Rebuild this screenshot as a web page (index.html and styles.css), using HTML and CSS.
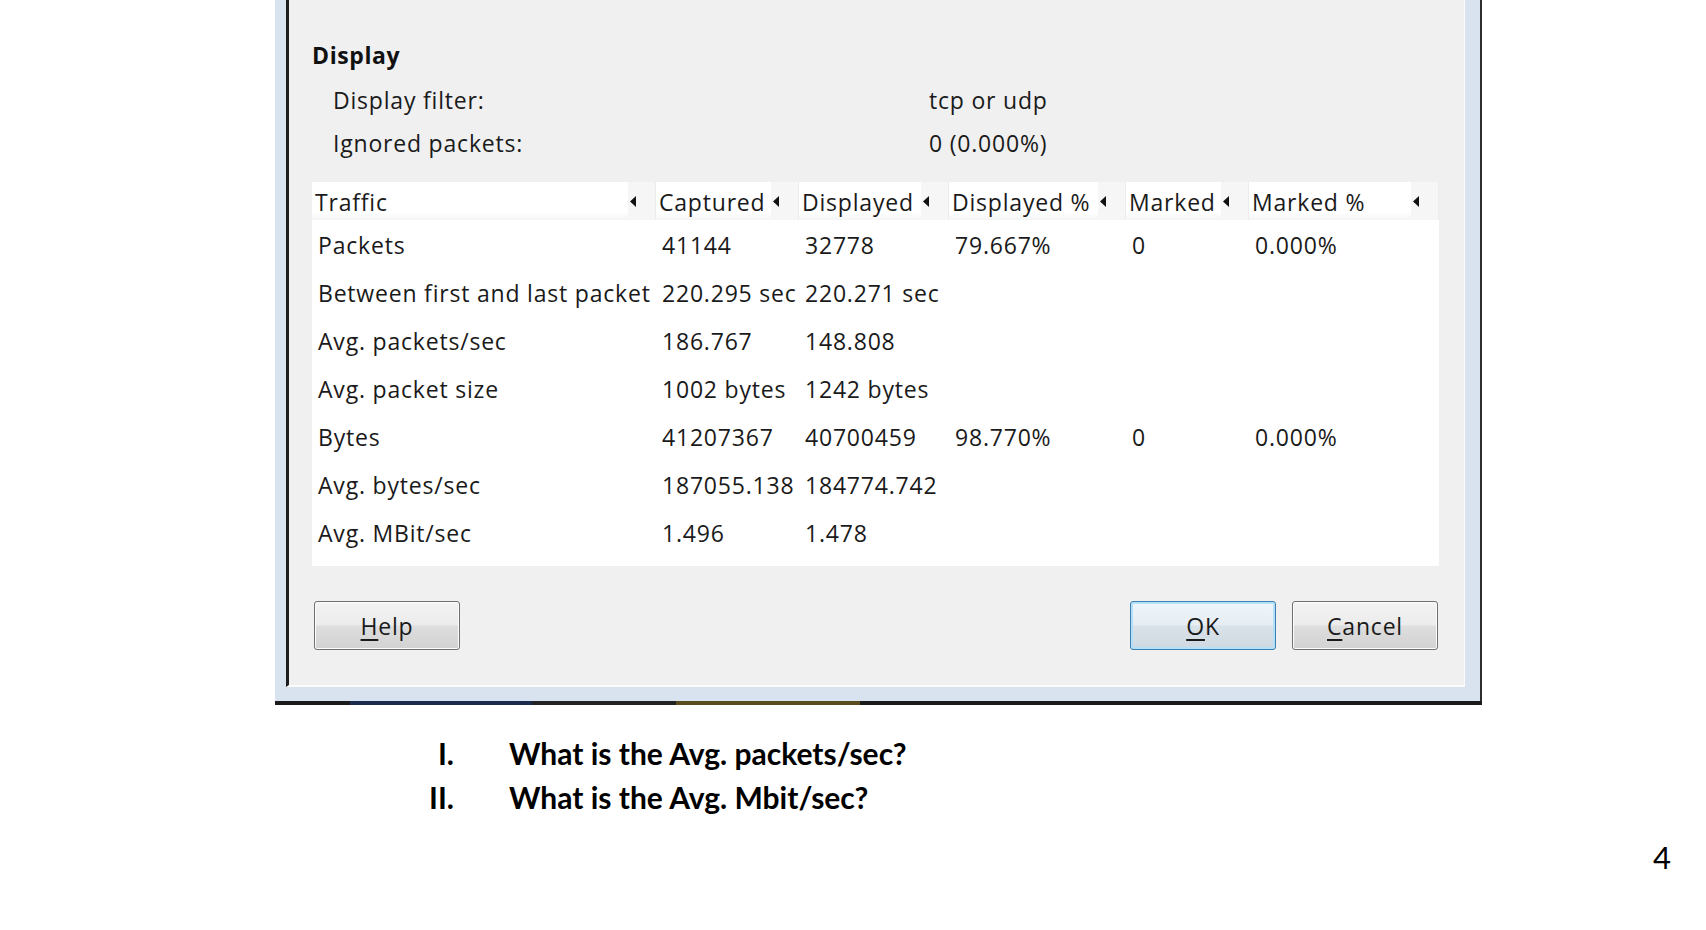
FILE: index.html
```html
<!DOCTYPE html>
<html lang="en">
<head>
<meta charset="utf-8">
<title>Capture File Properties - Display</title>
<link rel="stylesheet" href="styles.css">
</head>
<body>
<div class="page">
  <div class="dialog">
    <div class="panel">
      <div class="section-title">Display</div>
      <div class="props">
        <div class="prop"><span class="prop-label">Display filter:</span><span class="prop-value">tcp or udp</span></div>
        <div class="prop"><span class="prop-label">Ignored packets:</span><span class="prop-value">0 (0.000%)</span></div>
      </div>
      <div class="table">
        <div class="thead">
          <div class="th"><span class="th-label">Traffic</span><span class="th-sort"><svg class="arrow" viewBox="0 0 6 11" width="6" height="11"><polygon points="6,0 6,11 0,5.5"/></svg></span></div>
          <div class="th"><span class="th-label">Captured</span><span class="th-sort"><svg class="arrow" viewBox="0 0 6 11" width="6" height="11"><polygon points="6,0 6,11 0,5.5"/></svg></span></div>
          <div class="th"><span class="th-label">Displayed</span><span class="th-sort"><svg class="arrow" viewBox="0 0 6 11" width="6" height="11"><polygon points="6,0 6,11 0,5.5"/></svg></span></div>
          <div class="th"><span class="th-label">Displayed %</span><span class="th-sort"><svg class="arrow" viewBox="0 0 6 11" width="6" height="11"><polygon points="6,0 6,11 0,5.5"/></svg></span></div>
          <div class="th"><span class="th-label">Marked</span><span class="th-sort"><svg class="arrow" viewBox="0 0 6 11" width="6" height="11"><polygon points="6,0 6,11 0,5.5"/></svg></span></div>
          <div class="th"><span class="th-label">Marked %</span><span class="th-sort"><svg class="arrow" viewBox="0 0 6 11" width="6" height="11"><polygon points="6,0 6,11 0,5.5"/></svg></span></div>
        </div>
        <div class="tbody">
          <div class="tr"><span>Packets</span><span>41144</span><span>32778</span><span>79.667%</span><span>0</span><span>0.000%</span></div>
          <div class="tr"><span>Between first and last packet</span><span>220.295 sec</span><span>220.271 sec</span><span></span><span></span><span></span></div>
          <div class="tr"><span>Avg. packets/sec</span><span>186.767</span><span>148.808</span><span></span><span></span><span></span></div>
          <div class="tr"><span>Avg. packet size</span><span>1002 bytes</span><span>1242 bytes</span><span></span><span></span><span></span></div>
          <div class="tr"><span>Bytes</span><span>41207367</span><span>40700459</span><span>98.770%</span><span>0</span><span>0.000%</span></div>
          <div class="tr"><span>Avg. bytes/sec</span><span>187055.138</span><span>184774.742</span><span></span><span></span><span></span></div>
          <div class="tr"><span>Avg. MBit/sec</span><span>1.496</span><span>1.478</span><span></span><span></span><span></span></div>
        </div>
      </div>
      <div class="buttons">
        <button class="btn"><u>H</u>elp</button>
        <div class="spacer"></div>
        <button class="btn btn-default"><u>O</u>K</button>
        <button class="btn"><u>C</u>ancel</button>
      </div>
    </div>
  </div>
  <div class="taskbar"></div>
  <div class="questions">
    <span class="num">I.</span><span class="q">What is the Avg. packets/sec?</span>
    <span class="num">II.</span><span class="q">What is the Avg. Mbit/sec?</span>
  </div>
  <div class="pagenum">4</div>
</div>
</body>
</html>
```
FILE: styles.css
```css
* { box-sizing: border-box; }
html, body { margin: 0; padding: 0; background: #ffffff; }
body { width: 1706px; height: 930px; overflow: hidden; }

.page { display: flex; flex-direction: column; }

.dialog {
  margin-left: 275px;
  width: 1207px;
  background: #d9e3ef;
  padding: 0 15px 14px 11px;
  border-right: 2px solid #2e2e2e;
}

.panel {
  height: 687px;
  background: #f0f0f0;
  border-left: 3px solid #1c1c1c;
  border-right: 1px solid #fbfbfb;
  border-bottom: 2px solid #fbfbfb;
  padding: 35px 25px 0 23px;
  display: flex;
  flex-direction: column;
  font-family: "Open Sans", "Noto Sans", sans-serif;
  color: #1a1a1a;
  font-size: 23px;
  letter-spacing: 0.8px;
}

.section-title {
  font-weight: 700;
  line-height: 40px;
  height: 40px;
  margin-bottom: 4px;
  color: #111;
  letter-spacing: 0.6px;
}

.props { display: flex; flex-direction: column; }
.prop { display: flex; line-height: 43px; height: 43px; }
.prop-label { width: 617px; padding-left: 21px; }

.table {
  margin-top: 17px;
  background: #ffffff;
  height: 384px;
  display: flex;
  flex-direction: column;
}

.thead, .tr {
  display: grid;
  grid-template-columns: 344px 143px 150px 177px 123px 1fr;
}

.thead {
  height: 36px;
  border-bottom: 1px solid #e2e2e2;
  background: #ffffff;
}

.th {
  display: flex;
  align-items: stretch;
  border-right: 1px solid #ececec;
}
.th-label {
  flex: 1;
  padding: 3px 0 0 3px;
  line-height: 35px;
  white-space: nowrap;
  background: linear-gradient(#ffffff, #ffffff 80%, #f3f4f5);
}
.th-sort {
  width: 27px;
  display: flex;
  align-items: center;
  padding: 0 0 0 2px;
  background: #f6f6f6;
}
.arrow { fill: #111; display: block; }

.tbody { padding-top: 3px; }
.tr { height: 48px; line-height: 48px; }
.tr span { padding-left: 6px; white-space: nowrap; }

.buttons {
  margin-top: 35px;
  display: flex;
  gap: 16px;
  padding: 0 1px 0 2px;
}
.spacer { flex: 1; }

.btn {
  width: 146px;
  height: 49px;
  font-family: "Open Sans", "Noto Sans", sans-serif;
  font-size: 23px;
  letter-spacing: 0.8px;
  color: #1a1a1a;
  border: 1px solid #707070;
  border-radius: 3px;
  background: linear-gradient(#f3f3f3 0%, #ececec 48%, #dedede 52%, #d2d2d2 100%);
  box-shadow: inset 0 0 0 1px #fcfcfc;
  padding: 0;
}
.btn u { text-underline-offset: 4px; text-decoration-thickness: 2px; }
.btn-default {
  border-color: #3c7fb1;
  box-shadow: inset 0 0 0 2px #b6e0f7;
  background: linear-gradient(#eef6fb 0%, #e6eef4 48%, #d9e2e9 52%, #cfd9e1 100%);
}

.taskbar {
  margin-left: 275px;
  width: 1207px;
  height: 4px;
  background: linear-gradient(to right,
    #1b1b1b 0, #1b1b1b 75px,
    #1c2b4d 75px, #1c2b4d 257px,
    #242424 257px, #242424 401px,
    #5b4c1f 401px, #5b4c1f 585px,
    #1b1b1b 585px);
}

.questions {
  margin-top: 26px;
  margin-left: 400px;
  display: grid;
  grid-template-columns: 54px auto;
  column-gap: 55px;
  justify-content: start;
  font-family: Lato, "Liberation Sans", sans-serif;
  font-weight: 700;
  font-size: 30px;
  line-height: 44px;
  color: #000;
}
.num { text-align: right; }

.pagenum {
  margin-top: 18px;
  align-self: flex-end;
  padding-right: 35px;
  font-family: Lato, "Liberation Sans", sans-serif;
  font-size: 31px;
  line-height: 40px;
  color: #000;
}
```
